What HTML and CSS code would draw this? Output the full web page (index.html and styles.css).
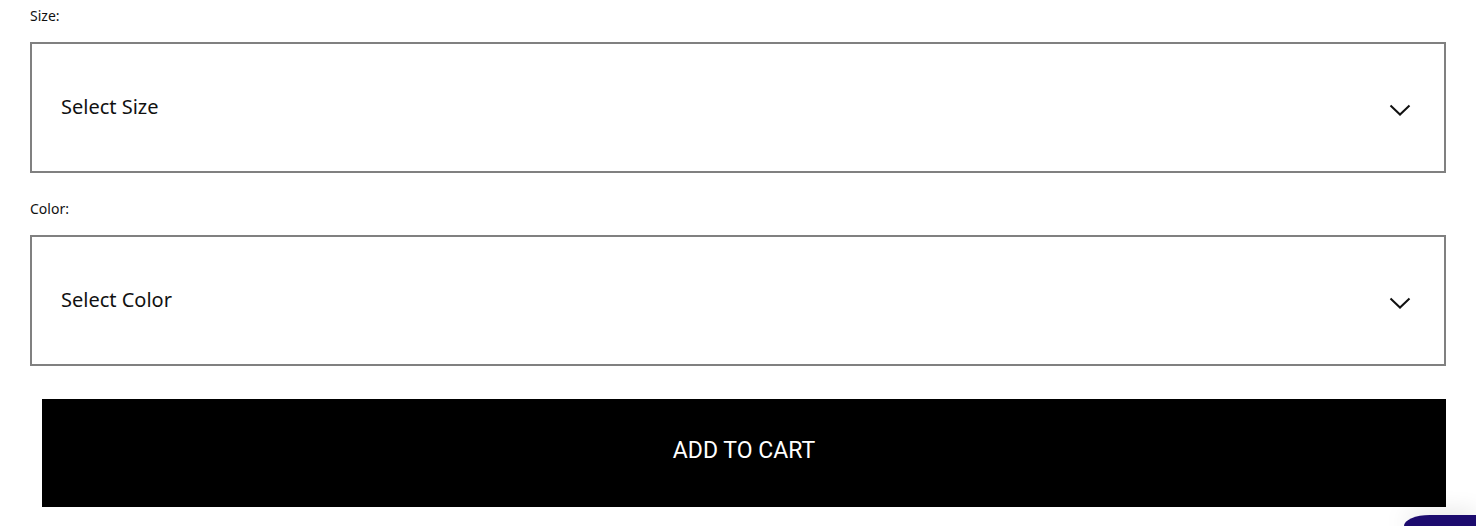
FILE: index.html
```html
<!DOCTYPE html>
<html lang="en">
<head>
    <meta charset="UTF-8">
    <title>Product options</title>
    <link rel="stylesheet" href="styles.css">
</head>
<body>
    <div class="product-form">
        <div class="option">
            <label class="option-label">Size:</label>
            <div class="select-box">
                <span class="select-text">Select Size</span>
                <svg class="chevron" width="22" height="12" viewBox="0 0 22 12"><path d="M1.5 1.5 L11 10.5 L20.5 1.5" fill="none" stroke="#111" stroke-width="2"/></svg>
            </div>
        </div>
        <div class="option">
            <label class="option-label">Color:</label>
            <div class="select-box">
                <span class="select-text">Select Color</span>
                <svg class="chevron" width="22" height="12" viewBox="0 0 22 12"><path d="M1.5 1.5 L11 10.5 L20.5 1.5" fill="none" stroke="#111" stroke-width="2"/></svg>
            </div>
        </div>
        <button class="add-to-cart">ADD TO CART</button>
    </div>
    <div class="chat-widget"></div>
</body>
</html>
```

FILE: styles.css
```css
html, body {
    margin: 0;
    padding: 0;
    background: #fff;
    overflow: hidden;
}

body {
    font-family: "Noto Sans", "Open Sans", sans-serif;
    color: #111;
    height: 526px;
    position: relative;
}

.product-form {
    padding: 6px 30px 0 30px;
    display: flex;
    flex-direction: column;
}

.option-label {
    display: block;
    font-size: 14px;
    line-height: 20px;
    height: 20px;
    margin-bottom: 16px;
}

.select-box {
    height: 127px;
    border: 2px solid #808080;
    display: flex;
    align-items: center;
    justify-content: space-between;
    padding: 0 33px 0 29px;
    margin-bottom: 26px;
}

.select-text {
    font-size: 20px;
    margin-top: -2px;
}

.chevron {
    display: block;
    margin-top: 4px;
}

.add-to-cart {
    margin: 7px 0 0 12px;
    height: 108px;
    background: #000;
    color: #fff;
    border: 0;
    font-family: "Liberation Sans Narrow", "Roboto", sans-serif;
    font-size: 23px;
    padding: 0 0 5px 0;
    cursor: pointer;
}

.chat-widget {
    position: absolute;
    right: 0;
    bottom: 0;
    width: 72px;
    height: 11px;
    background: #1c0b6e;
    border-top-left-radius: 28px 12px;
    box-shadow: 0 0 24px rgba(0, 0, 0, 0.18);
}
```
